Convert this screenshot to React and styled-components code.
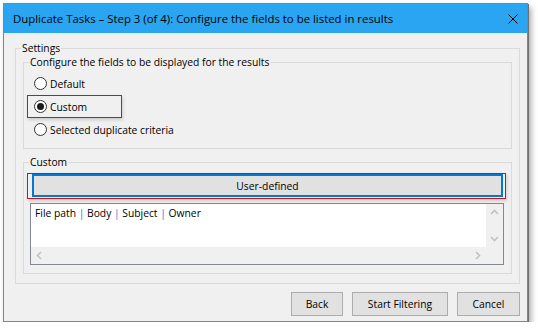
import React from "react";
import styled, { createGlobalStyle } from "styled-components";

const GlobalStyle = createGlobalStyle`
  html, body {
    margin: 0;
    background: #ffffff;
  }
  body {
    font-family: "Open Sans", "Liberation Sans", sans-serif;
    font-size: 10.3px;
    color: #000;
  }
`;

const Page = styled.div`
  padding: 3px 0 0 3px;
`;

const Window = styled.div`
  box-sizing: border-box;
  width: 525px;
  height: 319px;
  border: 1px solid #2a9fe8;
  background: #f0f0f0;
  box-shadow: 1px 1px 0 #707070, 3px 4px 6px rgba(0, 0, 0, 0.35);
  display: flex;
  flex-direction: column;
`;

const TitleBar = styled.div`
  height: 29px;
  flex: none;
  background: #2aa5f1;
  display: flex;
  align-items: center;
  justify-content: space-between;
  padding: 0 9px;
  font-size: 11.4px;
`;

const Body = styled.div`
  flex: 1;
  display: flex;
  flex-direction: column;
  padding: 8px 7px 4px 11px;
`;

const Group = styled.fieldset`
  margin: ${(p) => p.$margin || 0};
  min-width: 0;
  border: 1px solid #dadada;
  padding: ${(p) => p.$pad};
  display: flex;
  flex-direction: column;
`;

const Legend = styled.legend`
  padding: 0 1px;
  margin-left: ${(p) => p.$indent}px;
  line-height: 14px;
`;

// red annotation frame drawn round a highlighted control
const Marker = styled.div`
  box-sizing: border-box;
  width: ${(p) => p.$width || "auto"};
  margin: ${(p) => p.$margin};
  padding: ${(p) => p.$pad};
  border: 1px solid #c8141c;
  box-shadow: 1px 2px 3px rgba(0, 0, 0, 0.15);
`;

const RadioRow = styled.label`
  box-sizing: border-box;
  height: ${(p) => p.$h || 23}px;
  display: flex;
  align-items: center;
  gap: 3px;
  padding-left: ${(p) => p.$indent}px;
`;

const RadioDot = styled.span`
  box-sizing: border-box;
  width: 13px;
  height: 13px;
  border-radius: 50%;
  border: 1px solid #333;
  background: #fff;
  display: flex;
  align-items: center;
  justify-content: center;
  &::after {
    content: "";
    width: 7px;
    height: 7px;
    border-radius: 50%;
    background: ${(p) => (p.$checked ? "#1a1a1a" : "transparent")};
  }
`;

const WideButton = styled.div`
  box-sizing: border-box;
  height: 23px;
  border: 2px solid #0078d7;
  background: #e1e1e1;
  display: flex;
  align-items: center;
  justify-content: center;
`;

const ListBox = styled.div`
  box-sizing: border-box;
  height: 62px;
  margin: 4px 7px 8px 6px;
  border: 1px solid #828790;
  background: #fff;
  display: grid;
  grid-template-columns: 1fr 17px;
  grid-template-rows: 1fr 17px;
`;

const ListText = styled.div`
  padding: 2px 0 0 4px;
  line-height: 14px;
`;

const Pipe = styled.span`
  color: #2b7cd3;
`;

const VScroll = styled.div`
  background: #f0f0f0;
  display: flex;
  flex-direction: column;
  justify-content: space-between;
`;

const HScroll = styled.div`
  background: #f0f0f0;
  display: flex;
  justify-content: space-between;
`;

const Corner = styled.div`
  background: #f0f0f0;
`;

const ArrowBox = styled.div`
  width: 17px;
  height: 17px;
  display: flex;
  align-items: center;
  justify-content: center;
`;

const ButtonRow = styled.div`
  margin-top: 8px;
  display: flex;
  justify-content: flex-end;
  gap: 9px;
`;

const Button = styled.div`
  box-sizing: border-box;
  width: ${(p) => p.$w}px;
  height: 24px;
  border: 1px solid #adadad;
  background: #e1e1e1;
  display: flex;
  align-items: center;
  justify-content: center;
`;

const chevrons = {
  up: "M1 5 L4.5 1.5 L8 5",
  down: "M1 2 L4.5 5.5 L8 2",
  left: "M5 1 L1.5 4.5 L5 8",
  right: "M2 1 L5.5 4.5 L2 8",
};

function Arrow({ dir }) {
  const vertical = dir === "up" || dir === "down";
  return (
    <ArrowBox>
      <svg width={vertical ? 9 : 7} height={vertical ? 7 : 9} viewBox={vertical ? "0 0 9 7" : "0 0 7 9"}>
        <path d={chevrons[dir]} fill="none" stroke="#c2c2c2" strokeWidth="1.6" />
      </svg>
    </ArrowBox>
  );
}

export default function App() {
  return (
    <Page>
      <GlobalStyle />
      <Window>
        <TitleBar>
          <span>Duplicate Tasks – Step 3 (of 4): Configure the fields to be listed in results</span>
          <svg width="10" height="10" viewBox="0 0 10 10">
            <path d="M0.5 0.5 L9.5 9.5 M9.5 0.5 L0.5 9.5" stroke="#000" strokeWidth="1" />
          </svg>
        </TitleBar>
        <Body>
          <Group $pad="0 7px 9px 7px">
            <Legend $indent={-2}>Settings</Legend>
            <Group $pad="3px 0 7px 0">
              <Legend $indent={5}>Configure the fields to be displayed for the results</Legend>
              <RadioRow $indent={10}>
                <RadioDot />
                Default
              </RadioRow>
              <Marker $width="95px" $margin="0 0 0 3px" $pad="0 0 0 6px">
                <RadioRow $indent={0} $h={21}>
                  <RadioDot $checked />
                  Custom
                </RadioRow>
              </Marker>
              <RadioRow $indent={10}>
                <RadioDot />
                Selected duplicate criteria
              </RadioRow>
            </Group>
            <Group $pad="0" $margin="6px 0 0 0">
              <Legend $indent={5}>Custom</Legend>
              <Marker $margin="4px 5px 0 3px" $pad="0 2px 1px 4px">
                <WideButton>User-defined</WideButton>
              </Marker>
              <ListBox>
                <ListText>
                  File path <Pipe>|</Pipe> Body <Pipe>|</Pipe> Subject <Pipe>|</Pipe> Owner
                </ListText>
                <VScroll>
                  <Arrow dir="up" />
                  <Arrow dir="down" />
                </VScroll>
                <HScroll>
                  <Arrow dir="left" />
                  <Arrow dir="right" />
                </HScroll>
                <Corner />
              </ListBox>
            </Group>
          </Group>
          <ButtonRow>
            <Button $w={52}>Back</Button>
            <Button $w={96}>Start Filtering</Button>
            <Button $w={63}>Cancel</Button>
          </ButtonRow>
        </Body>
      </Window>
    </Page>
  );
}
